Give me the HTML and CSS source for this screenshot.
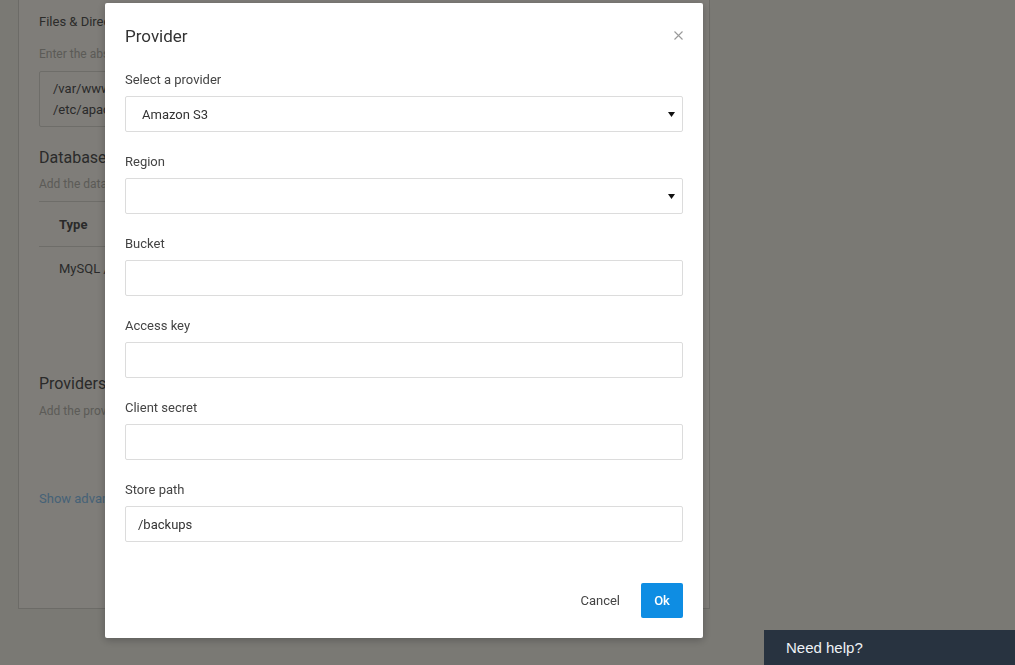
FILE: index.html
```html
<!DOCTYPE html>
<html lang="en">
<head>
<meta charset="utf-8">
<title>Backup settings</title>
<link rel="stylesheet" href="styles.css">
</head>
<body>
<div class="page">
  <section class="card">
    <h4 class="sec-title">Files &amp; Directories</h4>
    <p class="hint">Enter the absolute paths of the files and directories to back up</p>
    <div class="paths">
      <div>/var/www/html</div>
      <div>/etc/apache2</div>
    </div>
    <h3 class="sec-head">Databases</h3>
    <p class="hint">Add the databases to back up</p>
    <table class="db-table">
      <thead><tr><th>Type</th><th>Name</th><th>Host</th></tr></thead>
      <tbody><tr><td>MySQL / MariaDB</td><td>wordpress</td><td>localhost</td></tr></tbody>
    </table>
    <h3 class="sec-head providers-head">Providers</h3>
    <p class="hint">Add the providers where the backups will be stored</p>
    <a class="link" href="#">Show advanced settings</a>
  </section>
</div>

<div class="backdrop"></div>

<div class="modal">
  <div class="modal-header">
    <h2 class="modal-title">Provider</h2>
    <button class="close" type="button" aria-label="Close">
      <svg width="9" height="9" viewBox="0 0 9 9"><path d="M0.5 0.5L8.5 8.5M8.5 0.5L0.5 8.5" stroke="#9a9a9a" stroke-width="1.1" fill="none"/></svg>
    </button>
  </div>
  <div class="modal-body">
    <div class="field">
      <label class="label">Select a provider</label>
      <div class="select-box">
        <span class="select-value">Amazon S3</span>
        <svg class="arrow" width="7" height="5" viewBox="0 0 7 5"><path d="M0 0H7L3.5 5Z" fill="#111"/></svg>
      </div>
    </div>
    <div class="field">
      <label class="label">Region</label>
      <div class="select-box">
        <span class="select-value"></span>
        <svg class="arrow" width="7" height="5" viewBox="0 0 7 5"><path d="M0 0H7L3.5 5Z" fill="#111"/></svg>
      </div>
    </div>
    <div class="field">
      <label class="label">Bucket</label>
      <input class="input" type="text" value="">
    </div>
    <div class="field">
      <label class="label">Access key</label>
      <input class="input" type="text" value="">
    </div>
    <div class="field">
      <label class="label">Client secret</label>
      <input class="input" type="text" value="">
    </div>
    <div class="field">
      <label class="label">Store path</label>
      <input class="input" type="text" value="/backups">
    </div>
  </div>
  <div class="modal-footer">
    <button class="btn-cancel" type="button">Cancel</button>
    <button class="btn-ok" type="button">Ok</button>
  </div>
</div>

<div class="help">Need help?</div>
</body>
</html>
```

FILE: styles.css
```css
* { box-sizing: border-box; }

html, body {
  margin: 0;
  height: 100%;
}

body {
  background: #f4f2e9;
  font-family: Roboto, "Noto Sans", Arial, sans-serif;
  overflow: hidden;
}

.page {
  padding-left: 18px;
}

.card {
  width: 692px;
  background: #fefbf3;
  border: 1px solid #d8d6ce;
  border-top: 0;
  padding: 13px 20px 100px 20px;
  color: #555;
}

.sec-title {
  margin: 0;
  font-size: 13px;
  font-weight: 400;
  line-height: 18px;
  color: #585856;
}

.hint {
  margin: 14px 0 0;
  font-size: 12px;
  line-height: 18px;
  color: #b8b6ae;
  white-space: nowrap;
}

.paths {
  margin-top: 8px;
  border: 1px solid #dcdad2;
  border-radius: 2px;
  padding: 6px 13px;
  font-size: 13px;
  line-height: 21px;
  color: #555;
  width: 560px;
}

.sec-head {
  margin: 20px 0 0;
  font-size: 16px;
  font-weight: 400;
  line-height: 22px;
  color: #555;
}

.sec-head + .hint {
  margin-top: 6px;
}

.db-table {
  margin-top: 8px;
  width: 100%;
  border-collapse: collapse;
  font-size: 13px;
  color: #555;
}

.db-table th {
  text-align: left;
  font-weight: 700;
  height: 45px;
  padding: 0 20px;
  border-top: 1px solid #dcdad2;
  border-bottom: 1px solid #dcdad2;
}

.db-table td {
  height: 44px;
  padding: 0 20px;
}

.providers-head {
  margin-top: 82px;
}

.providers-head + .hint {
  margin-top: 7px;
}

.link {
  display: block;
  margin-top: 70px;
  font-size: 13px;
  line-height: 18px;
  color: #8cc4ee;
  text-decoration: none;
}

.backdrop {
  position: fixed;
  inset: 0;
  background: rgba(0, 0, 0, 0.5);
}

.modal {
  position: fixed;
  left: 105px;
  top: 3px;
  width: 598px;
  height: 635px;
  background: #fff;
  border-radius: 2px;
  box-shadow: 0 2px 8px rgba(0, 0, 0, 0.25);
  padding: 0 20px 20px;
  display: flex;
  flex-direction: column;
}

.modal-header {
  display: flex;
  justify-content: space-between;
  align-items: center;
  padding-top: 21px;
}

.modal-title {
  margin: 0;
  font-size: 17px;
  font-weight: 400;
  line-height: 24px;
  color: #333;
}

.close {
  border: 0;
  background: none;
  padding: 0;
  width: 9px;
  height: 9px;
  display: flex;
  margin-top: -1px;
}

.modal-body {
  margin-top: 23px;
}

.field {
  display: flex;
  flex-direction: column;
  margin-bottom: 21px;
}

.field:last-child {
  margin-bottom: 0;
}

.label {
  font-size: 13px;
  line-height: 18px;
  color: #444;
  margin-bottom: 7px;
}

.select-box {
  position: relative;
  height: 36px;
  border: 1px solid #dcdcdc;
  border-radius: 2px;
  display: flex;
  align-items: center;
  padding-left: 16px;
  font-size: 13px;
  color: #333;
}

.arrow {
  position: absolute;
  right: 7px;
  top: 15px;
}

.input {
  height: 36px;
  border: 1px solid #dcdcdc;
  border-radius: 2px;
  padding: 0 12px;
  font-family: Roboto, "Noto Sans", Arial, sans-serif;
  font-size: 13px;
  color: #333;
  outline: none;
}

.modal-footer {
  margin-top: auto;
  display: flex;
  justify-content: flex-end;
  align-items: center;
  gap: 21px;
}

.btn-cancel {
  border: 0;
  background: none;
  padding: 0;
  font-family: Roboto, "Noto Sans", Arial, sans-serif;
  font-size: 13px;
  color: #444;
}

.btn-ok {
  width: 42px;
  height: 35px;
  border: 0;
  border-radius: 2px;
  background: #0e8de3;
  color: #fff;
  font-family: Roboto, "Noto Sans", Arial, sans-serif;
  font-size: 13px;
  font-weight: 500;
}

.help {
  position: fixed;
  left: 764px;
  top: 630px;
  width: 251px;
  height: 35px;
  background: #283340;
  color: #eef2f6;
  font-family: "Liberation Sans", Arial, sans-serif;
  font-size: 15px;
  line-height: 35px;
  padding-left: 22px;
}
```
